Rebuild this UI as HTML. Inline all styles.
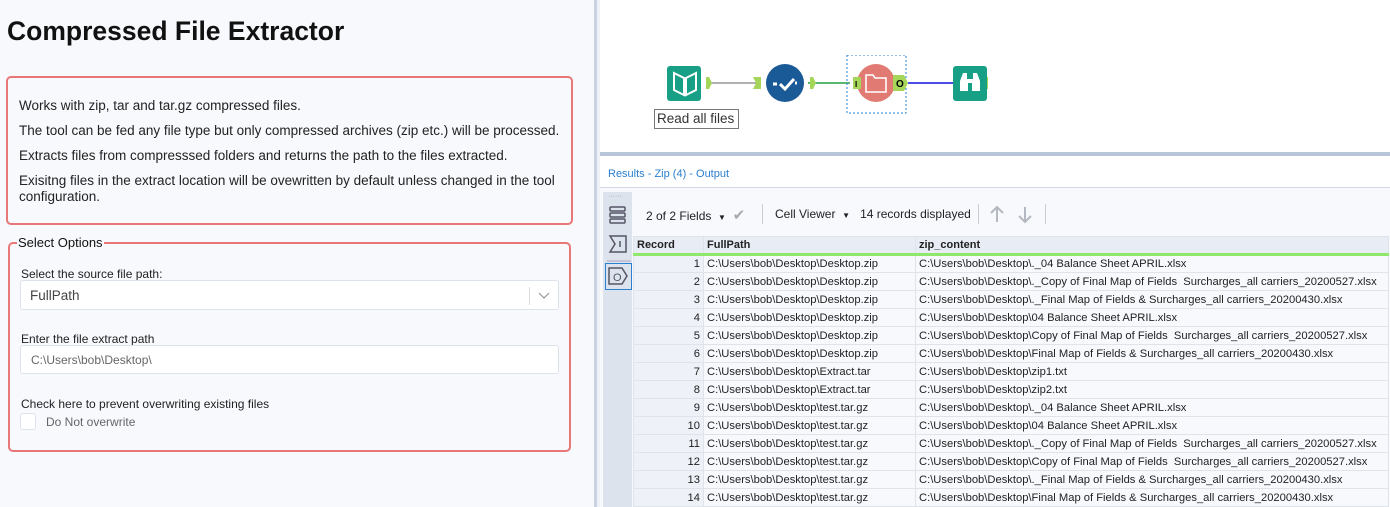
<!DOCTYPE html>
<html><head><meta charset="utf-8"><style>
*{margin:0;padding:0;box-sizing:border-box}
body{width:1390px;height:507px;overflow:hidden;background:#f7f9fd;font-family:"Liberation Sans",sans-serif;position:relative}
.a{position:absolute}
.box{border:2px solid #e87878;border-radius:5px}
p.t{position:absolute;left:19px;font-size:13.5px;color:#222}
.lbl{position:absolute;left:21px;font-size:12px;color:#222}
.inp{position:absolute;left:20px;width:539px;background:#fff;border:1px solid #dde3ea;border-radius:3px}
table{border-collapse:collapse;font-size:11.2px;color:#222;table-layout:fixed}
td{height:18px;border:1px solid #dfe3ea;padding:0 3px;white-space:nowrap;overflow:hidden}
td.r{text-align:right;background:#eef1f7}
th{height:18px;text-align:left;font-size:11px;padding:0 3px;background:#e8ecf4;border:1px solid #dfe3ea;border-bottom:3px solid #8fe86a}
</style></head><body>
<div class="a" style="left:7px;top:16px;font-size:26.5px;font-weight:bold;color:#111">Compressed File Extractor</div>
<div class="a box" style="left:6px;top:76px;width:567px;height:149px"></div>
<p class="t" style="top:98px">Works with zip, tar and tar.gz compressed files.</p>
<p class="t" style="top:123px">The tool can be fed any file type but only compressed archives (zip etc.) will be processed.</p>
<p class="t" style="top:148px">Extracts files from compresssed folders and returns the path to the files extracted.</p>
<p class="t" style="top:173px;line-height:16px;width:540px">Exisitng files in the extract location will be ovewritten by default unless changed in the tool configuration.</p>
<div class="a box" style="left:8px;top:242px;width:563px;height:210px"></div>
<div class="a" style="left:17px;top:235px;font-size:13px;color:#111;background:#f7f9fd;padding:0 1px">Select Options</div>
<div class="lbl" style="top:267px">Select the source file path:</div>
<div class="inp" style="top:280px;height:30px"><span class="a" style="left:9px;top:7px;font-size:13.5px;color:#444">FullPath</span><span class="a" style="left:508px;top:6px;width:1px;height:18px;background:#ddd"></span><svg class="a" style="left:516px;top:9px" width="14" height="12"><path d="M2 3l5 5 5-5" fill="none" stroke="#999" stroke-width="1.2"/></svg></div>
<div class="lbl" style="top:332px">Enter the file extract path</div>
<div class="inp" style="top:345px;height:29px"><span class="a" style="left:10px;top:7px;font-size:12px;color:#666">C:\Users\bob\Desktop\</span></div>
<div class="lbl" style="top:397px">Check here to prevent overwriting existing files</div>
<div class="a" style="left:20px;top:413px;width:16px;height:17px;background:#fff;border:1px solid #dde3ea;border-radius:3px"></div>
<div class="a" style="left:46px;top:415px;font-size:12px;color:#666">Do Not overwrite</div>

<div class="a" style="left:594px;top:0;width:3px;height:507px;background:#c9d3e3"></div>
<div class="a" style="left:597px;top:0;width:3px;height:507px;background:#eef1f6"></div>
<div class="a" style="left:600px;top:0;width:790px;height:152px;background:#fff"></div>
<div class="a" style="left:600px;top:152px;width:790px;height:4px;background:#b8c4d8"></div>
<div class="a" style="left:600px;top:156px;width:790px;height:32px;background:#fff;border-bottom:1px solid #d4d9e2"></div>
<div class="a" style="left:608px;top:168px;font-size:11px;color:#2a7fd0">Results - Zip (4) - Output</div>

<svg class="a" style="left:640px;top:55px" width="380" height="80">
<line x1="70" y1="28" x2="118" y2="28" stroke="#999" stroke-width="1.5"/>
<line x1="168" y1="28" x2="210" y2="28" stroke="#22a040" stroke-width="1.5"/>
<line x1="268" y1="28" x2="345" y2="28" stroke="#1010e0" stroke-width="1.5"/>
<rect x="27" y="11" width="34" height="35" rx="3" fill="#17a086"/>
<path d="M34 18l10 5v17l-10-5z M46 23l10-5v17l-10 5z" fill="none" stroke="#fff" stroke-width="2"/>
<path d="M66 22h3l3 6-3 6h-3z" fill="#a5d65a"/>
<path d="M113 22h8v12h-8l3-6z" fill="#a5d65a"/>
<circle cx="145" cy="28" r="19" fill="#1a5a96"/>
<path d="M133 29l4 0 M140 29l5 5 9-10 M155 28h2" stroke="#fff" stroke-width="3" fill="none"/>
<path d="M170 22h3l3 6-3 6h-3z" fill="#a5d65a"/>
<rect x="207" y="0" width="59" height="58" fill="none" stroke="#2a7fd0" stroke-dasharray="2,2"/>
<circle cx="236" cy="28" r="19" fill="#e07a72"/>
<path d="M226 20h7l2 3h11v14h-20z" fill="none" stroke="#fff" stroke-width="1.6"/>
<path d="M213 22h8v12h-8z" fill="#a5d65a"/><text x="215" y="32" font-size="8" font-family="Liberation Sans" font-weight="bold">I</text>
<path d="M253 20h11l4 8-4 8h-11z" fill="#a5d65a"/><text x="256" y="32" font-size="10" font-family="Liberation Sans" font-weight="bold">O</text>
<path d="M340 22h8v12h-8l3-6z" fill="#a5d65a"/>
<rect x="313" y="11" width="34" height="35" rx="3" fill="#17a086"/>
<path d="M320 36v-10l3-8h4v6h6v-6h4l3 8v10h-8v-8h-4v8z" fill="#fff"/>
</svg>
<div class="a" style="left:654px;top:109px;width:85px;height:20px;border:1px solid #777;background:#fff;font-size:13.5px;color:#333;padding:1px 2px;white-space:nowrap">Read all files</div>

<div class="a" style="left:603px;top:192px;width:29px;height:315px;background:#dde3ec"></div>
<div class="a" style="left:608px;top:193px;font-size:7px;color:#999">······</div>
<svg class="a" style="left:605px;top:200px" width="28" height="95">
<g fill="none" stroke="#556" stroke-width="1.5"><rect x="5" y="7" width="15" height="4" rx="1"/><rect x="5" y="13" width="15" height="4" rx="1"/><rect x="5" y="19" width="15" height="4" rx="1"/>
<path d="M5 36h16v16H5l5-8z"/><line x1="15" y1="41" x2="15" y2="47"/>
<line x1="2" y1="61" x2="26" y2="61" stroke="#bbc"/>
<path d="M4 68h13l5 8-5 8H4z"/></g>
<rect x="0.5" y="63.5" width="26" height="26" fill="none" stroke="#2a7fd0"/>
<text x="8" y="81" font-size="11" font-family="Liberation Sans" fill="#556">O</text>
</svg>
<div class="a" style="left:633px;top:190px;width:757px;height:44px;background:#f7f9fd"></div>
<div class="a" style="left:646px;top:206px;font-size:12px;color:#222">2 of 2 Fields&nbsp;&nbsp;<span style="font-size:8px">▼</span>&nbsp;&nbsp;<span style="color:#aaa;font-size:15px">✔</span></div>
<div class="a" style="left:762px;top:204px;width:1px;height:20px;background:#ccc"></div>
<div class="a" style="left:775px;top:207px;font-size:12px;color:#222">Cell Viewer&nbsp;&nbsp;<span style="font-size:8px">▼</span>&nbsp;&nbsp;&nbsp;14 records displayed</div>
<div class="a" style="left:978px;top:204px;width:1px;height:20px;background:#ccc"></div>
<svg class="a" style="left:987px;top:204px" width="50" height="20"><g stroke="#b4b8c0" stroke-width="2" fill="none"><path d="M10 3v15M4 9l6-6 6 6"/><path d="M38 3v15M32 12l6 6 6-6"/></g></svg>
<div class="a" style="left:1045px;top:204px;width:1px;height:20px;background:#ccc"></div>

<table class="a" style="left:633px;top:236px;width:755px">
<colgroup><col style="width:70px"><col style="width:212px"><col style="width:473px"></colgroup>
<tr><th>Record</th><th>FullPath</th><th>zip_content</th></tr>
<tr><td class="r">1</td><td>C:\Users\bob\Desktop\Desktop.zip</td><td>C:\Users\bob\Desktop\._04 Balance Sheet APRIL.xlsx</td></tr>
<tr><td class="r">2</td><td>C:\Users\bob\Desktop\Desktop.zip</td><td>C:\Users\bob\Desktop\._Copy of Final Map of Fields&nbsp; Surcharges_all carriers_20200527.xlsx</td></tr>
<tr><td class="r">3</td><td>C:\Users\bob\Desktop\Desktop.zip</td><td>C:\Users\bob\Desktop\._Final Map of Fields &amp; Surcharges_all carriers_20200430.xlsx</td></tr>
<tr><td class="r">4</td><td>C:\Users\bob\Desktop\Desktop.zip</td><td>C:\Users\bob\Desktop\04 Balance Sheet APRIL.xlsx</td></tr>
<tr><td class="r">5</td><td>C:\Users\bob\Desktop\Desktop.zip</td><td>C:\Users\bob\Desktop\Copy of Final Map of Fields&nbsp; Surcharges_all carriers_20200527.xlsx</td></tr>
<tr><td class="r">6</td><td>C:\Users\bob\Desktop\Desktop.zip</td><td>C:\Users\bob\Desktop\Final Map of Fields &amp; Surcharges_all carriers_20200430.xlsx</td></tr>
<tr><td class="r">7</td><td>C:\Users\bob\Desktop\Extract.tar</td><td>C:\Users\bob\Desktop\zip1.txt</td></tr>
<tr><td class="r">8</td><td>C:\Users\bob\Desktop\Extract.tar</td><td>C:\Users\bob\Desktop\zip2.txt</td></tr>
<tr><td class="r">9</td><td>C:\Users\bob\Desktop\test.tar.gz</td><td>C:\Users\bob\Desktop\._04 Balance Sheet APRIL.xlsx</td></tr>
<tr><td class="r">10</td><td>C:\Users\bob\Desktop\test.tar.gz</td><td>C:\Users\bob\Desktop\04 Balance Sheet APRIL.xlsx</td></tr>
<tr><td class="r">11</td><td>C:\Users\bob\Desktop\test.tar.gz</td><td>C:\Users\bob\Desktop\._Copy of Final Map of Fields&nbsp; Surcharges_all carriers_20200527.xlsx</td></tr>
<tr><td class="r">12</td><td>C:\Users\bob\Desktop\test.tar.gz</td><td>C:\Users\bob\Desktop\Copy of Final Map of Fields&nbsp; Surcharges_all carriers_20200527.xlsx</td></tr>
<tr><td class="r">13</td><td>C:\Users\bob\Desktop\test.tar.gz</td><td>C:\Users\bob\Desktop\._Final Map of Fields &amp; Surcharges_all carriers_20200430.xlsx</td></tr>
<tr><td class="r">14</td><td>C:\Users\bob\Desktop\test.tar.gz</td><td>C:\Users\bob\Desktop\Final Map of Fields &amp; Surcharges_all carriers_20200430.xlsx</td></tr>
</table>
</body></html>
